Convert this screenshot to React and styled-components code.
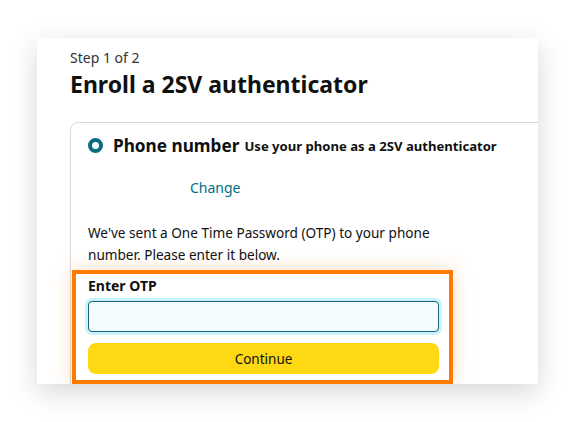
import React from "react";
import styled, { createGlobalStyle } from "styled-components";

const GlobalStyle = createGlobalStyle`
  body {
    margin: 0;
    background: #ffffff;
    font-family: "Noto Sans", "Liberation Sans", sans-serif;
    color: #0f1111;
  }
`;

function App() {
  return (
    <>
      <GlobalStyle />
      <Page>
        <Card>
          <StepLabel>Step 1 of 2</StepLabel>
          <Title>Enroll a 2SV authenticator</Title>
          <OptionBox>
            <OptionRow>
              <Radio />
              <OptionName>Phone number</OptionName>
              <OptionHint>Use your phone as a 2SV authenticator</OptionHint>
            </OptionRow>
            <ChangeLink href="#">Change</ChangeLink>
            <Message>
              We've sent a One Time Password (OTP) to your phone
              <br />
              number. Please enter it below.
            </Message>
            <Highlight>
              <FieldLabel>Enter OTP</FieldLabel>
              <OtpInput />
              <ContinueButton>Continue</ContinueButton>
            </Highlight>
          </OptionBox>
        </Card>
      </Page>
    </>
  );
}

const Page = styled.div`
  padding: 38px 0 0 37px;
  height: 422px;
  box-sizing: border-box;
`;

const Card = styled.div`
  width: 501px;
  height: 346px;
  box-sizing: border-box;
  padding: 10px 0 0 33px;
  background: #ffffff;
  overflow: hidden;
  box-shadow: 0 8px 26px rgba(0, 0, 0, 0.16);
`;

const StepLabel = styled.div`
  font-size: 14px;
  line-height: 20px;
  color: #333;
`;

const Title = styled.h1`
  margin: 1px 0 0;
  font-size: 23px;
  line-height: 30px;
  font-weight: 700;
`;

const OptionBox = styled.div`
  margin-top: 23px;
  width: 540px;
  box-sizing: border-box;
  border: 1px solid #d5d9d9;
  border-radius: 8px 0 0 0;
  padding: 10px 0 0 17px;
`;

const OptionRow = styled.div`
  display: flex;
  align-items: center;
  height: 24px;
`;

const Radio = styled.span`
  width: 15px;
  height: 15px;
  box-sizing: border-box;
  border-radius: 50%;
  border: 4.5px solid #0b6a7e;
  margin-right: 10px;
  flex: none;
`;

const OptionName = styled.span`
  font-size: 17.2px;
  font-weight: 700;
  margin-right: 5px;
`;

const OptionHint = styled.span`
  font-size: 13.1px;
  font-weight: 700;
  padding-top: 2px;
`;

const ChangeLink = styled.a`
  display: block;
  width: max-content;
  margin: 21px 0 0 102px;
  font-size: 14px;
  line-height: 20px;
  color: #007185;
  text-decoration: none;
`;

const Message = styled.p`
  margin: 24px 0 0;
  font-size: 13.6px;
  line-height: 21.5px;
`;

const Highlight = styled.div`
  margin: 5px 0 0 -16px;
  width: 381px;
  box-sizing: border-box;
  border: 4px solid #ff7a00;
  padding: 2px 10px 6px 12px;
  background: #ffffff;
  box-shadow: 0 0 18px rgba(255, 140, 40, 0.3);
`;

const FieldLabel = styled.div`
  font-size: 14px;
  line-height: 20px;
  font-weight: 700;
`;

const OtpInput = styled.input`
  display: block;
  margin-top: 5px;
  width: 100%;
  height: 31px;
  box-sizing: border-box;
  border: 1px solid #1c6275;
  border-radius: 4px;
  background: #f2fcfe;
  box-shadow: 0 0 0 3px #c8f3fa;
  outline: none;
`;

const ContinueButton = styled.button`
  display: block;
  margin-top: 11px;
  width: 100%;
  height: 31px;
  border: none;
  border-radius: 8px;
  background: #ffd814;
  font-family: "Noto Sans", "Liberation Sans", sans-serif;
  font-size: 13.5px;
  color: #0f1111;
`;

export default App;
